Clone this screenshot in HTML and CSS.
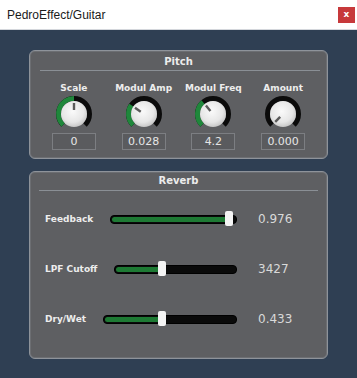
FILE: index.html
```html
<!DOCTYPE html>
<html>
<head>
<meta charset="utf-8">
<link rel="stylesheet" href="styles.css">
</head>
<body>
<div class="window">
  <div class="titlebar">
    <span class="title">PedroEffect/Guitar</span>
    <span class="close">x</span>
  </div>
  <div class="content">
    <section class="panel pitch">
      <div class="panel-title">Pitch</div>
      <div class="rule"></div>
      <div class="knobs">
        <div class="knob-col">
          <div class="knob-label">Scale</div>
          <svg class="knob" width="38" height="38" viewBox="0 0 38 38">
            <defs>
              <radialGradient id="kg1" cx="45%" cy="40%" r="60%">
                <stop offset="0" stop-color="#fafafa"/>
                <stop offset="0.7" stop-color="#e6e6e6"/>
                <stop offset="1" stop-color="#c8c8c8"/>
              </radialGradient>
            </defs>
            <path d="M 8.04 29.96 A 15.5 15.5 0 1 1 29.96 29.96" class="ring"/>
            <path d="M 8.04 29.96 A 15.5 15.5 0 0 1 19 3.5" class="arc"/>
            <circle cx="19" cy="19" r="13" fill="url(#kg1)"/>
            <line x1="19" y1="15" x2="19" y2="8" class="ptr"/>
          </svg>
          <div class="knob-value">0</div>
        </div>
        <div class="knob-col">
          <div class="knob-label">Modul Amp</div>
          <svg class="knob" width="38" height="38" viewBox="0 0 38 38">
            <path d="M 8.04 29.96 A 15.5 15.5 0 1 1 29.96 29.96" class="ring"/>
            <path d="M 8.04 29.96 A 15.5 15.5 0 0 1 6.30 10.11" class="arc"/>
            <circle cx="19" cy="19" r="13" fill="url(#kg1)"/>
            <line x1="15.72" y1="16.71" x2="9.99" y2="12.69" class="ptr"/>
          </svg>
          <div class="knob-value">0.028</div>
        </div>
        <div class="knob-col">
          <div class="knob-label">Modul Freq</div>
          <svg class="knob" width="38" height="38" viewBox="0 0 38 38">
            <path d="M 8.04 29.96 A 15.5 15.5 0 1 1 29.96 29.96" class="ring"/>
            <path d="M 8.04 29.96 A 15.5 15.5 0 0 1 9.04 7.13" class="arc"/>
            <circle cx="19" cy="19" r="13" fill="url(#kg1)"/>
            <line x1="16.43" y1="15.94" x2="11.93" y2="10.57" class="ptr"/>
          </svg>
          <div class="knob-value">4.2</div>
        </div>
        <div class="knob-col">
          <div class="knob-label">Amount</div>
          <svg class="knob" width="38" height="38" viewBox="0 0 38 38">
            <path d="M 8.04 29.96 A 15.5 15.5 0 1 1 29.96 29.96" class="ring"/>
            <circle cx="19" cy="19" r="13" fill="url(#kg1)"/>
            <line x1="16.17" y1="21.83" x2="11.22" y2="26.78" class="ptr"/>
          </svg>
          <div class="knob-value">0.000</div>
        </div>
      </div>
    </section>
    <section class="panel reverb">
      <div class="panel-title">Reverb</div>
      <div class="rule"></div>
      <div class="rows">
        <div class="row">
          <span class="row-label">Feedback</span>
          <div class="track" style="--v:0.976"><div class="fill"></div><div class="thumb"></div></div>
          <span class="row-value">0.976</span>
        </div>
        <div class="row">
          <span class="row-label">LPF Cutoff</span>
          <div class="track" style="--v:0.38"><div class="fill"></div><div class="thumb"></div></div>
          <span class="row-value">3427</span>
        </div>
        <div class="row">
          <span class="row-label">Dry/Wet</span>
          <div class="track" style="--v:0.433"><div class="fill"></div><div class="thumb"></div></div>
          <span class="row-value">0.433</span>
        </div>
      </div>
    </section>
  </div>
</div>
</body>
</html>
```

FILE: styles.css
```css
html, body {
  margin: 0;
  padding: 0;
}
body {
  width: 357px;
  height: 378px;
  background: #2f3f53;
  overflow: hidden;
  font-family: "DejaVu Sans", Verdana, sans-serif;
}
.window {
  display: flex;
  flex-direction: column;
  height: 378px;
}
.titlebar {
  height: 29px;
  background: #ffffff;
  border-bottom: 1px solid #d4d7dc;
  display: flex;
  align-items: center;
  justify-content: space-between;
  padding: 0 2px 0 7px;
}
.title {
  font-family: "Liberation Sans", Arial, sans-serif;
  font-size: 12px;
  color: #1a1a1a;
  margin-top: 1px;
}
.close {
  width: 17px;
  height: 16px;
  background: #c7393b;
  color: #fff;
  font-family: "DejaVu Sans", sans-serif;
  font-weight: bold;
  font-size: 9px;
  line-height: 15px;
  text-align: center;
  margin-top: 1px;
}
.content {
  display: flex;
  flex-direction: column;
  padding: 20px 29px 0 29px;
  gap: 12px;
}
.panel {
  background: #5e5f62;
  border: 1px solid #8e939a;
  border-radius: 6px;
  box-sizing: border-box;
  width: 299px;
  box-shadow: inset 0 0 0 1px #6c6e72;
}
.pitch {
  height: 109px;
  padding: 4px 9px 0 9px;
}
.reverb {
  height: 188px;
  padding: 2px 0 0 0;
}
.panel-title {
  font-weight: bold;
  font-size: 10px;
  line-height: 14px;
  color: #ececec;
  text-align: center;
}
.rule {
  height: 1px;
  background: #8a8f95;
  margin: 1px 0 0 0;
}
.pitch .rule {
  margin: 1px 0 0 1px;
  width: 280px;
}
.reverb .rule {
  margin: 2px 9px 0 9px;
}
.knobs {
  display: flex;
  margin-top: 11px;
}
.knob-col {
  width: 70px;
  display: flex;
  flex-direction: column;
  align-items: center;
}
.knob-label {
  font-weight: bold;
  font-size: 9px;
  line-height: 12px;
  color: #ededed;
  white-space: nowrap;
}
.knob {
  display: block;
  margin-top: 1px;
}
.ring {
  fill: none;
  stroke: #0b0b0b;
  stroke-width: 5;
}
.arc {
  fill: none;
  stroke: #1f873b;
  stroke-width: 5;
}
.ptr {
  stroke: #5a5a5a;
  stroke-width: 2.4;
}
.knob-value {
  width: 44px;
  height: 17px;
  box-sizing: border-box;
  border: 1px solid #7c7e82;
  background: #5a5b5e;
  color: #e6e6e6;
  font-size: 11px;
  line-height: 15px;
  text-align: center;
  margin-top: 0px;
}
.rows {
  display: flex;
  flex-direction: column;
  gap: 20px;
  margin-top: 13px;
  padding: 0 19px 0 15px;
}
.row {
  height: 30px;
  display: flex;
  align-items: center;
}
.row-label {
  font-weight: bold;
  font-size: 9px;
  color: #ededed;
  white-space: nowrap;
  margin-right: 17px;
}
.track {
  flex: 1;
  height: 7px;
  background: #0a0a0a;
  border: 1px solid #000;
  border-radius: 4px;
  position: relative;
}
.fill {
  position: absolute;
  left: 1px;
  top: 1px;
  bottom: 1px;
  width: calc(var(--v) * (100% - 8px) + 3px);
  background: #1e7a34;
  border-radius: 3px;
}
.thumb {
  position: absolute;
  top: -5px;
  width: 8px;
  height: 15px;
  left: calc(var(--v) * (100% - 8px));
  background: #f4f4f4;
  border-radius: 2px;
}
.row-value {
  width: 50px;
  margin-left: 21px;
  font-size: 12px;
  color: #d9d9d9;
  white-space: nowrap;
}
```
